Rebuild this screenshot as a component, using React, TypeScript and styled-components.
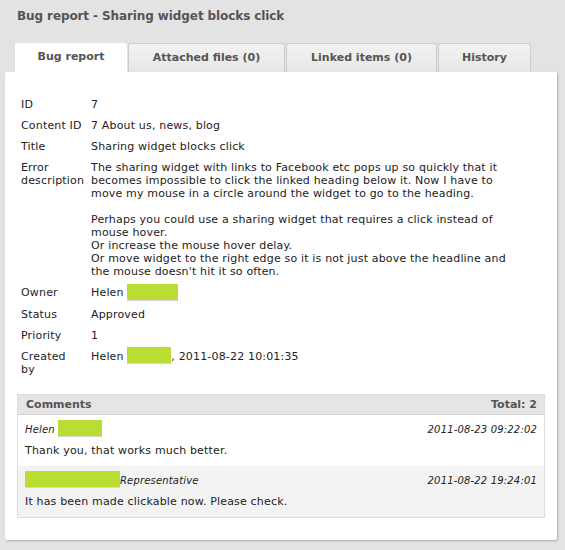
import React from "react";
import styled, {createGlobalStyle} from "styled-components";

const GlobalStyle = createGlobalStyle`
  html, body {
    margin: 0;
    padding: 0;
    background: #e3e3e3;
  }
  body {
    font-family: "DejaVu Sans", Verdana, sans-serif;
    font-size: 11px;
    letter-spacing: 0.17px;
    color: #222;
  }
`

type Row = {
    label: string;
    value: React.ReactNode;
}

const Redacted = styled.span<{ $w: number }>`
  display: inline-block;
  width: ${p => p.$w}px;
  height: 16px;
  background: #b9dd33;
  box-shadow: 0 1px 0 #d8d8d8;
  vertical-align: middle;
  margin-top: -3px;
`

const rows: Row[] = [
    {label: "ID", value: "7"},
    {label: "Content\u00a0ID", value: "7 About us, news, blog"},
    {label: "Title", value: "Sharing widget blocks click"},
    {
        label: "Error description",
        value: <>
            The sharing widget with links to Facebook etc pops up so quickly that it becomes impossible to click the linked heading below it. Now I have to move my mouse in a circle around the widget to go to the heading.
            <br/><br/>
            Perhaps you could use a sharing widget that requires a click instead of mouse hover.
            <br/>
            Or increase the mouse hover delay.
            <br/>
            Or move widget to the right edge so it is not just above the headline and the mouse doesn't hit it so often.
        </>,
    },
    {label: "Owner", value: <>Helen <Redacted $w={51}/></>},
    {label: "Status", value: "Approved"},
    {label: "Priority", value: "1"},
    {label: "Created by", value: <>Helen <Redacted $w={44}/>, 2011-08-22 10:01:35</>},
];

const tabs = [
    {name: "Bug report", width: 112, active: true},
    {name: "Attached files (0)", width: 157},
    {name: "Linked items (0)", width: 151},
    {name: "History", width: 93},
];

export default function App() {
    return <Page>
        <GlobalStyle/>
        <Heading>Bug report - Sharing widget blocks click</Heading>
        <TabBar>
            {tabs.map(t => <Tab key={t.name} $w={t.width} $active={!!t.active}>{t.name}</Tab>)}
        </TabBar>
        <Panel>
            <Details>
                <tbody>
                {rows.map(r => <tr key={r.label}>
                    <Label>{r.label}</Label>
                    <Value>{r.value}</Value>
                </tr>)}
                </tbody>
            </Details>
            <Comments>
                <CommentsHeader>
                    <span>Comments</span>
                    <span>Total: 2</span>
                </CommentsHeader>
                <Comment>
                    <CommentMeta>
                        <span>Helen <Redacted $w={44}/></span>
                        <span>2011-08-23 09:22:02</span>
                    </CommentMeta>
                    <CommentText>Thank you, that works much better.</CommentText>
                </Comment>
                <Comment $alt>
                    <CommentMeta>
                        <span><Redacted $w={95}/>Representative</span>
                        <span>2011-08-22 19:24:01</span>
                    </CommentMeta>
                    <CommentText>It has been made clickable now. Please check.</CommentText>
                </Comment>
            </Comments>
        </Panel>
    </Page>
}

const Page = styled.div`
  width: 565px;
  height: 550px;
  padding-top: 9px;
  box-sizing: border-box;
`

const Heading = styled.h1`
  margin: 0 0 0 17px;
  font-size: 12px;
  line-height: 15px;
  font-weight: bold;
  letter-spacing: -0.1px;
  color: #555;
`

const TabBar = styled.div`
  display: flex;
  margin: 19px 0 0 15px;
  height: 29px;
`

const Tab = styled.div<{ $w: number; $active: boolean }>`
  width: ${p => p.$w}px;
  box-sizing: border-box;
  display: flex;
  align-items: center;
  justify-content: center;
  font-weight: bold;
  letter-spacing: 0;
  color: #555;
  border-radius: 3px 3px 0 0;
  border: 1px solid ${p => p.$active ? "#fff" : "#cdcdcd"};
  border-bottom: none;
  margin-right: 1px;
  background: ${p => p.$active ? "#fff" : "linear-gradient(#f2f2f2, #e7e7e7)"};
  height: ${p => p.$active ? "30px" : "29px"};
  position: relative;
  z-index: ${p => p.$active ? 2 : 0};
  padding-bottom: ${p => p.$active ? "4px" : "2px"};
`

const Panel = styled.div`
  position: relative;
  z-index: 1;
  margin: 0 8px 0 5px;
  height: 468px;
  box-sizing: border-box;
  background: #fff;
  border-radius: 2px;
  box-shadow: 1px 1px 2px rgba(0, 0, 0, 0.25);
  padding: 26px 12px 0 12px;
`

const Details = styled.table`
  border-collapse: collapse;
  margin-left: 4px;
  width: 494px;
  table-layout: fixed;
`

const Label = styled.td`
  width: 56px;
  padding: 0 14px 8px 0;
  vertical-align: top;
  line-height: 13px;
`

const Value = styled.td`
  padding: 0 0 8px 0;
  vertical-align: top;
  line-height: 13px;
`

const Comments = styled.div`
  margin-top: 10px;
  border: 1px solid #dcdcdc;
`

const CommentsHeader = styled.div`
  display: flex;
  justify-content: space-between;
  height: 19px;
  align-items: center;
  padding: 0 7px 0 8px;
  background: #e5e5e5;
  border-bottom: 1px solid #d2d2d2;
  font-weight: bold;
  letter-spacing: 0;
  color: #555;
`

const Comment = styled.div<{ $alt?: boolean }>`
  background: ${p => p.$alt ? "#f3f3f3" : "#fff"};
  padding: 7px 7px 9px 7px;
`

const CommentMeta = styled.div`
  display: flex;
  justify-content: space-between;
  align-items: center;
  height: 16px;
  font-style: italic;
  font-size: 10px;
  color: #222;
  margin-bottom: 6px;
`

const CommentText = styled.div`
  line-height: 13px;
`
